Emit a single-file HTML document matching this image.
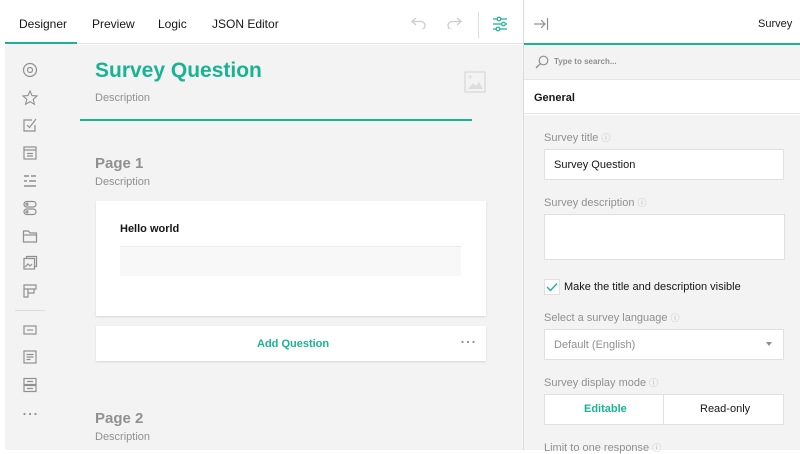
<!DOCTYPE html>
<html><head><style>
*{box-sizing:border-box;margin:0;padding:0}
body{width:800px;height:450px;overflow:hidden;background:#fff;font-family:"Liberation Sans",sans-serif;position:relative;font-size:12px;color:#161616}
.a{position:absolute}
.gray{background:#f3f3f3}
.ic{position:absolute;left:22px;width:16px;height:16px}
svg{display:block}
</style></head><body>
<div class="a" style="left:0;top:0;width:523px;height:44px;background:#fff;border-bottom:1px solid #e4e4e4"></div>
<div class="a" style="left:19px;top:17px;font-size:12px;color:#161616">Designer</div>
<div class="a" style="left:5px;top:42px;width:72px;height:2px;background:#19b394"></div>
<div class="a" style="left:92px;top:17px">Preview</div>
<div class="a" style="left:158px;top:17px">Logic</div>
<div class="a" style="left:212px;top:17px">JSON Editor</div>
<svg class="a" style="left:411px;top:17px" width="16" height="12" viewBox="0 0 16 12"><path d="M5 1L1 4.5 5 8M1 4.5h9a4 4 0 0 1 0 8" fill="none" stroke="#ccc" stroke-width="1.3"/></svg>
<svg class="a" style="left:446px;top:17px" width="16" height="12" viewBox="0 0 16 12"><path d="M11 1l4 3.5L11 8M15 4.5H6a4 4 0 0 0 0 8" fill="none" stroke="#ccc" stroke-width="1.3"/></svg>
<div class="a" style="left:478px;top:12px;width:1px;height:26px;background:#ddd"></div>
<svg class="a" style="left:492px;top:16px" width="16" height="16" viewBox="0 0 16 16" fill="none" stroke="#19b394" stroke-width="1.2"><path d="M1 3h4M9 3h6M1 8h9M13 8h2M1 13h3M8 13h7"/><circle cx="7" cy="3" r="1.8"/><circle cx="11.5" cy="8" r="1.8"/><circle cx="6" cy="13" r="1.8"/></svg>
<div class="a gray" style="left:5px;top:45px;width:518px;height:405px"></div>
<div class="a" style="left:15px;top:310px;width:30px;height:1px;background:#ddd"></div>
<div class="a" style="left:0;top:0;width:60px;height:450px">
<svg class="ic" style="top:62px" viewBox="0 0 16 16" fill="none" stroke="#909090" stroke-width="1.2"><circle cx="8" cy="8" r="6.5"/><circle cx="8" cy="8" r="2.5"/></svg>
<svg class="ic" style="top:90px" viewBox="0 0 16 16" fill="none" stroke="#909090" stroke-width="1.1"><path d="M8 1l2 4.6 5 .4-3.8 3.3 1.2 5L8 11.7 3.6 14.3l1.2-5L1 6l5-.4z"/></svg>
<svg class="ic" style="top:117px" viewBox="0 0 16 16" fill="none" stroke="#909090" stroke-width="1.2"><path d="M13 8v6H2V3h8"/><path d="M5 8l2.5 2.5L14 2"/></svg>
<svg class="ic" style="top:145px" viewBox="0 0 16 16" fill="none" stroke="#909090" stroke-width="1.2"><rect x="2" y="2" width="12" height="12"/><path d="M2 5h12M5 8.5h6M5 11h6"/></svg>
<svg class="ic" style="top:173px" viewBox="0 0 16 16" fill="none" stroke="#909090" stroke-width="1.5"><path d="M2 3h5M9 3h5M2 8h3M7 8h7M2 13h12"/></svg>
<svg class="ic" style="top:200px" viewBox="0 0 16 16" fill="none" stroke="#909090" stroke-width="1.2"><rect x="2" y="1.5" width="12" height="5.5" rx="2.7"/><rect x="2" y="9" width="12" height="5.5" rx="2.7"/><circle cx="5" cy="4.2" r="1"/><circle cx="5" cy="11.8" r="1"/></svg>
<svg class="ic" style="top:228px" viewBox="0 0 16 16" fill="none" stroke="#909090" stroke-width="1.2"><path d="M1.5 3h5l1.5 2h6.5v9h-13z"/><path d="M1.5 7h13"/></svg>
<svg class="ic" style="top:255px" viewBox="0 0 16 16" fill="none" stroke="#909090" stroke-width="1.2"><rect x="2" y="3.5" width="10.5" height="10.5"/><path d="M4.5 3.5V1.5h10v10h-2M3 12l3-3 2 2 2-2"/></svg>
<svg class="ic" style="top:283px" viewBox="0 0 16 16" fill="none" stroke="#909090" stroke-width="1.2"><path d="M2 2h12v4H2zM2 6v8h4V6M6 6h6v4H6"/></svg>
<svg class="ic" style="top:322px" viewBox="0 0 16 16" fill="none" stroke="#909090" stroke-width="1.2"><rect x="2" y="4" width="12" height="8"/><path d="M5 8h6"/></svg>
<svg class="ic" style="top:349px" viewBox="0 0 16 16" fill="none" stroke="#909090" stroke-width="1.2"><rect x="2" y="2" width="12" height="12"/><path d="M4.5 5.5h7M4.5 8h7M4.5 10.5h4"/></svg>
<svg class="ic" style="top:377px" viewBox="0 0 16 16" fill="none" stroke="#909090" stroke-width="1.2"><rect x="2" y="1.5" width="12" height="6"/><rect x="2" y="8.5" width="12" height="6"/><path d="M5 4.5h6M5 11.5h6"/></svg>
<svg class="ic" style="top:406px" viewBox="0 0 16 16" fill="#909090"><circle cx="2.5" cy="8" r="1.1"/><circle cx="8" cy="8" r="1.1"/><circle cx="13.5" cy="8" r="1.1"/></svg>
</div>
<div class="a" style="left:95px;top:59px;font-size:21px;font-weight:bold;color:#19b394">Survey Question</div>
<div class="a" style="left:95px;top:92px;color:#909090;font-size:11px">Description</div>
<svg class="a" style="left:464px;top:71px" width="22" height="22" viewBox="0 0 22 22"><rect x="1" y="1" width="20" height="20" fill="none" stroke="#ddd" stroke-width="1.5"/><path d="M4 18l5-6 3 3 3-4 4 7z" fill="#ddd"/><circle cx="6" cy="6" r="1.5" fill="#ddd"/></svg>
<div class="a" style="left:80px;top:119px;width:392px;height:2px;background:#19b394"></div>
<div class="a" style="left:95px;top:155px;font-size:15px;font-weight:bold;color:#909090">Page 1</div>
<div class="a" style="left:95px;top:176px;font-size:11px;color:#909090">Description</div>
<div class="a" style="left:96px;top:201px;width:390px;height:115px;background:#fff;box-shadow:0 1px 2px rgba(0,0,0,.12)"></div>
<div class="a" style="left:120px;top:223px;font-size:11px;font-weight:bold">Hello world</div>
<div class="a" style="left:120px;top:246px;width:341px;height:30px;background:#f8f8f8;border-top:1px solid #eaeaea"></div>
<div class="a" style="left:96px;top:326px;width:390px;height:35px;background:#fff;box-shadow:0 1px 2px rgba(0,0,0,.12)"></div>
<div class="a" style="left:257px;top:338px;font-size:11px;color:#19b394;font-weight:bold">Add Question</div>
<svg class="a" style="left:460px;top:339px" width="16" height="6" viewBox="0 0 16 6" fill="#909090"><circle cx="2.5" cy="3" r="1.1"/><circle cx="8" cy="3" r="1.1"/><circle cx="13.5" cy="3" r="1.1"/></svg>
<div class="a" style="left:95px;top:410px;font-size:15px;font-weight:bold;color:#909090">Page 2</div>
<div class="a" style="left:95px;top:431px;font-size:11px;color:#909090">Description</div>
<div class="a" style="left:523px;top:0;width:1px;height:450px;background:#dcdcdc"></div>
<div class="a" style="left:524px;top:0;width:276px;height:44px;background:#fff"></div>
<svg class="a" style="left:534px;top:18px" width="15" height="12" viewBox="0 0 15 12"><path d="M0 6h11M7 2l4 4-4 4M13.5 0v12" fill="none" stroke="#909090" stroke-width="1.2"/></svg>
<div class="a" style="left:758px;top:18px;font-size:11px">Survey</div>
<div class="a" style="left:524px;top:43px;width:276px;height:2px;background:#19b394"></div>
<div class="a gray" style="left:524px;top:45px;width:276px;height:35px;border-bottom:1px solid #e4e4e4"></div>
<svg class="a" style="left:535px;top:55px" width="14" height="14" viewBox="0 0 14 14"><circle cx="8.5" cy="5.5" r="4.3" fill="none" stroke="#909090" stroke-width="1.2"/><path d="M5.5 8.5L1 13" stroke="#909090" stroke-width="1.3"/></svg>
<div class="a" style="left:554px;top:57px;font-size:8px;color:#909090;font-weight:bold">Type to search...</div>
<div class="a" style="left:524px;top:80px;width:276px;height:34px;background:#fff;border-bottom:1px solid #e4e4e4"></div>
<div class="a" style="left:534px;top:92px;font-size:11px;font-weight:bold">General</div>
<div class="a gray" style="left:524px;top:115px;width:276px;height:335px"></div>
<div class="a" style="left:544px;top:131px;font-size:11px;color:#909090">Survey title <span style="font-size:9px;color:#bbb">ⓘ</span></div>
<div class="a" style="left:544px;top:149px;width:240px;height:31px;background:#fff;border:1px solid #e0e0e0;padding:9px;font-size:11px">Survey Question</div>
<div class="a" style="left:544px;top:196px;font-size:11px;color:#909090">Survey description <span style="font-size:9px;color:#bbb">ⓘ</span></div>
<div class="a" style="left:544px;top:214px;width:241px;height:46px;background:#fff;border:1px solid #e0e0e0"></div>
<div class="a" style="left:544px;top:279px;width:16px;height:16px;background:#fff;border:1px solid #e0e0e0"></div>
<svg class="a" style="left:546px;top:282px" width="12" height="10" viewBox="0 0 12 10"><path d="M1 5l3.5 3.5L11 1.5" fill="none" stroke="#19b394" stroke-width="1.4"/></svg>
<div class="a" style="left:564px;top:281px;font-size:11px">Make the title and description visible</div>
<div class="a" style="left:544px;top:311px;font-size:11px;color:#909090">Select a survey language <span style="font-size:9px;color:#bbb">ⓘ</span></div>
<div class="a" style="left:544px;top:329px;width:240px;height:31px;background:#fff;border:1px solid #e0e0e0;padding:9px;font-size:11px;color:#909090">Default (English)</div>
<div class="a" style="left:766px;top:342px;border:3px solid transparent;border-top:4px solid #909090"></div>
<div class="a" style="left:544px;top:376px;font-size:11px;color:#909090">Survey display mode <span style="font-size:9px;color:#bbb">ⓘ</span></div>
<div class="a" style="left:544px;top:394px;width:240px;height:31px;background:#fff;border:1px solid #e0e0e0"></div>
<div class="a" style="left:663px;top:395px;width:1px;height:29px;background:#e0e0e0"></div>
<div class="a" style="left:584px;top:403px;font-size:11px;color:#19b394;font-weight:bold">Editable</div>
<div class="a" style="left:700px;top:403px;font-size:11px">Read-only</div>
<div class="a" style="left:544px;top:441px;font-size:11px;color:#909090">Limit to one response <span style="font-size:9px;color:#bbb">ⓘ</span></div>
<div class="a" style="left:0;top:0;width:5px;height:450px;background:#fff"></div>
</body></html>
